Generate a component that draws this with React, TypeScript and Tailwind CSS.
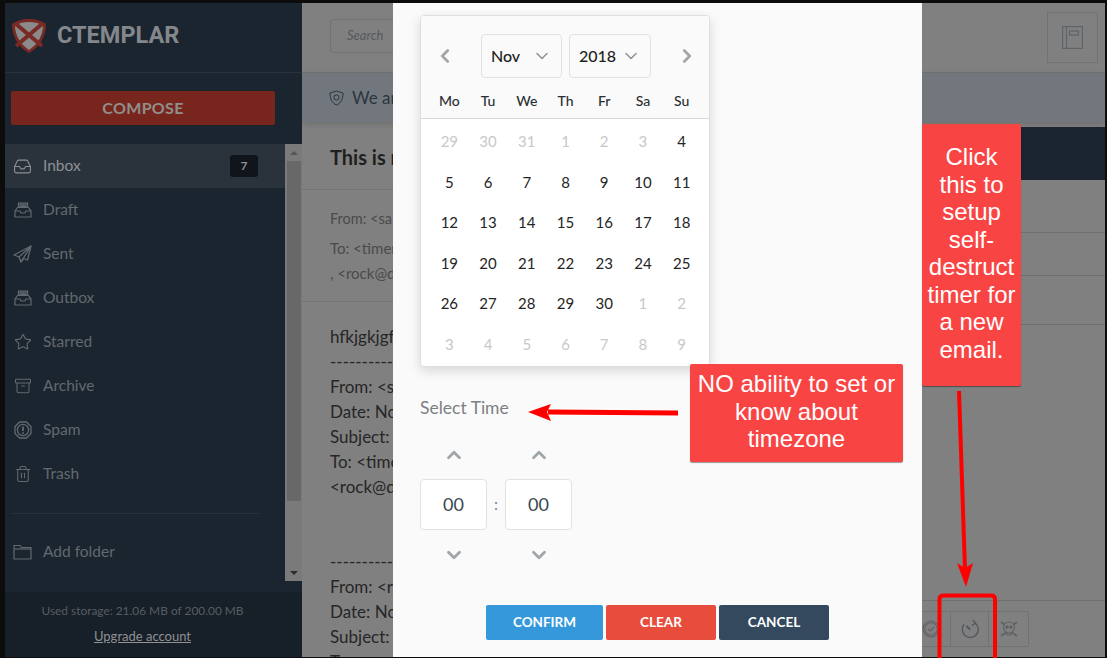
import React from "react";
import { Archive, ChevronDown, ChevronLeft, ChevronRight, ChevronUp, Star, Trash2, Inbox } from "lucide-react";

const Draft = ({ className = "" }: { className?: string }) => (
  <svg viewBox="0 0 18 16" width="18" height="16" fill="none" stroke="currentColor" strokeWidth="1.2" className={className}>
    <path d="M1 9 L3.5 5.5 H14.5 L17 9 V15 H1 Z" />
    <path d="M1 9 H6 L7 11 H11 L12 9 H17" />
    <path d="M4.5 5.5 V1 H13.5 V5.5" fill="currentColor" fillOpacity="0.5" />
    <path d="M6 3 H12 M6 4.6 H12" />
  </svg>
);

const SpamIcon = () => (
  <svg viewBox="0 0 18 18" width="18" height="18" fill="none" stroke="currentColor" strokeWidth="1.3">
    <path d="M5.6 1 H12.4 L17 5.6 V12.4 L12.4 17 H5.6 L1 12.4 V5.6 Z" />
    <circle cx="9" cy="9" r="5.6" />
    <path d="M9 5.6 V10" strokeWidth="1.8" />
    <path d="M9 11.3 V12.7" strokeWidth="1.8" />
  </svg>
);

const SentIcon = () => (
  <svg viewBox="0 0 19 18" width="19" height="18" fill="none" stroke="currentColor" strokeWidth="1.3" strokeLinejoin="round">
    <path d="M18 1 L1 10 L6 12 L8 17 L10.5 13.5 L14.5 15 Z" />
    <path d="M18 1 L6 12 M18 1 L8 17" />
  </svg>
);

const FolderIcon = () => (
  <svg viewBox="0 0 19 16" width="19" height="16" fill="none" stroke="currentColor" strokeWidth="1.2">
    <path d="M1 15 V1.5 H7 L8.5 3.5 H18 V15 Z" />
    <path d="M1 5 H18" />
  </svg>
);

const Logo = () => (
  <svg viewBox="0 0 36 36" width="36" height="36" className="shrink-0">
    <path d="M18 1 C25 1 31 3 35 6 C35 18 29 29 18 35 C7 29 1 18 1 6 C5 3 11 1 18 1 Z" fill="#7a2a24" />
    <path d="M18 4 C23 4 28 5 32 7.5 C32 17 27 26 18 32 C9 26 4 17 4 7.5 C8 5 13 4 18 4 Z" fill="#8b8b8b" />
    <path d="M5 6 L31 28 M31 6 L5 28" stroke="#7a2a24" strokeWidth="4" />
  </svg>
);

const nav = [
  { label: "Inbox", icon: <Inbox size={19} strokeWidth={1.4} />, active: true },
  { label: "Draft", icon: <Draft /> },
  { label: "Sent", icon: <SentIcon /> },
  { label: "Outbox", icon: <Draft /> },
  { label: "Starred", icon: <Star size={18} strokeWidth={1.5} /> },
  { label: "Archive", icon: <Archive size={18} strokeWidth={1.4} /> },
  { label: "Spam", icon: <SpamIcon /> },
  { label: "Trash", icon: <Trash2 size={18} strokeWidth={1.4} /> },
];

const weeks = [
  [["29", 0], ["30", 0], ["31", 0], ["1", 0], ["2", 0], ["3", 0], ["4", 1]],
  [["5", 1], ["6", 1], ["7", 1], ["8", 1], ["9", 1], ["10", 1], ["11", 1]],
  [["12", 1], ["13", 1], ["14", 1], ["15", 1], ["16", 1], ["17", 1], ["18", 1]],
  [["19", 1], ["20", 1], ["21", 1], ["22", 1], ["23", 1], ["24", 1], ["25", 1]],
  [["26", 1], ["27", 1], ["28", 1], ["29", 1], ["30", 1], ["1", 0], ["2", 0]],
  [["3", 0], ["4", 0], ["5", 0], ["6", 0], ["7", 0], ["8", 0], ["9", 0]],
] as [string, number][][];

const days = ["Mo", "Tu", "We", "Th", "Fr", "Sa", "Su"];

function Sidebar() {
  return (
    <aside className="w-[297px] shrink-0 bg-[#1b252f] flex flex-col">
      <div className="h-[70px] border-b border-[#29323c] flex items-center pl-[6px] gap-[10px] pb-[4px]">
        <Logo />
        <span className="text-[23.5px] font-bold text-[#84888c] font-['Roboto',sans-serif]">CTEMPLAR</span>
      </div>
      <div className="pl-[6px] pt-[18px]">
        <div className="w-[264px] h-[34px] rounded-[2px] bg-[#78251e] flex items-center justify-center text-[16px] font-bold tracking-[0.3px] text-[#8f8f8b]">COMPOSE</div>
      </div>
      <div className="mt-[19px] flex h-[437px]">
        <div className="w-[280px] shrink-0">
          {nav.map((n) => (
            <div key={n.label} className={`h-[44px] flex items-center text-[15.5px] ${n.active ? "bg-[#2a323c] text-[#8d9094]" : "text-[#62696f]"}`}>
              <span className="w-[38px] flex justify-center pr-[3px] shrink-0">{n.icon}</span>
              <span className="pb-[1px]">{n.label}</span>
              {n.active && <span className="ml-auto mr-[27px] w-[28px] h-[22px] rounded-[3px] bg-[#10151b] text-[#8f9295] text-[12px] font-bold flex items-center justify-center">7</span>}
            </div>
          ))}
          <div className="mx-[6px] mt-[17px] w-[248px] border-t border-[#29323c]" />
          <div className="h-[44px] mt-[16px] flex items-center text-[15.5px] text-[#62696f]">
            <span className="w-[38px] flex justify-center pr-[3px] shrink-0"><FolderIcon /></span>
            <span className="pb-[1px]">Add folder</span>
          </div>
        </div>
        <div className="w-[17px] bg-[#7a7a7a] flex flex-col items-center shrink-0">
          <div className="h-[17px] flex items-center"><div className="w-0 h-0 border-x-[4px] border-x-transparent border-b-[4px] border-b-[#565656]" /></div>
          <div className="w-[14px] h-[340px] bg-[#686868]" />
          <div className="flex-1" />
          <div className="h-[17px] flex items-center"><div className="w-0 h-0 border-x-[4px] border-x-transparent border-t-[4px] border-t-[#2c2c2c]" /></div>
        </div>
      </div>
      <div className="mt-[11px] flex-1 bg-[#171f28] flex flex-col items-center pt-[11px] pr-[22px]">
        <div className="text-[11.9px] text-[#575d63] leading-[16px]">Used storage: 21.06 MB of 200.00 MB</div>
        <div className="text-[13px] text-[#8f9194] underline leading-[16px] mt-[9px]">Upgrade account</div>
      </div>
    </aside>
  );
}

function MainPane() {
  return (
    <main className="flex-1 min-w-0 bg-[#808080] flex flex-col overflow-hidden">
      <div className="h-[70px] shrink-0 border-b border-[#727272] flex items-center justify-between pl-[28px] pr-[7px]">
        <div className="h-[34px] w-[300px] border border-[#727272] rounded-[3px] flex items-center pl-[16px] text-[13px] italic text-[#55595c] -mt-[3px]">Search</div>
        <div className="w-[51px] h-[51px] border border-[#727272] flex items-center justify-center -mt-[1px]">
          <svg width="21" height="23" viewBox="0 0 21 23" fill="none" stroke="#5d646b" strokeWidth="1.2">
            <rect x="0.6" y="0.6" width="19.8" height="21.8" />
            <path d="M4.5 0.6 V22.4" />
            <rect x="7.5" y="5" width="9" height="4" />
          </svg>
        </div>
      </div>
      <div className="h-[49px] shrink-0 bg-[#71777d] flex items-center pl-[27px] gap-[8px] text-[17px] text-[#2b3540] shadow-[0_2px_6px_rgba(0,0,0,0.15)]">
        <svg width="15" height="16" viewBox="0 0 15 16" fill="none" stroke="#2b3540" strokeWidth="1">
          <path d="M7.5 1 L14 3 C14 9 12 13 7.5 15 C3 13 1 9 1 3 Z" />
          <circle cx="7.5" cy="7.5" r="2.6" />
        </svg>
        <span>We are</span>
      </div>
      <div className="flex flex-1 min-h-0">
        <div className="w-[400px] shrink-0 flex flex-col overflow-hidden whitespace-nowrap">
          <div className="h-[68px] shrink-0 border-b border-[#747474] flex items-center pl-[28px] text-[20px] font-bold text-[#1f1f1f] pt-[2px]">This is r</div>
          <div className="h-[112px] shrink-0 border-b border-[#747474] pl-[28px] text-[14.5px] text-[#4a4a4a]">
            <div className="mt-[18px] leading-[22px]">From: &lt;sa</div>
            <div className="mt-[7px] leading-[22px] text-[15px]">To: &lt;timer</div>
            <div className="mt-[3px] leading-[22px] text-[15px]">, &lt;rock@d</div>
          </div>
          <div className="pl-[28px] pt-[22px] text-[17px] leading-[25px] text-[#262626]">
            <div>hfkjgkjgf</div>
            <div>----------</div>
            <div>From: &lt;s</div>
            <div>Date: No</div>
            <div>Subject:</div>
            <div>To: &lt;time</div>
            <div>&lt;rock@d</div>
            <div className="h-[50px]" />
            <div>----------</div>
            <div>From: &lt;r</div>
            <div>Date: No</div>
            <div>Subject:</div>
            <div className="h-[19px] overflow-hidden">To:</div>
          </div>
        </div>
        <div className="flex-1 flex flex-col pt-[5px] min-w-0">
          <div className="h-[53px] shrink-0 bg-[#1b252f]" />
          <div className="h-[53px] shrink-0 border-b border-[#707070]" />
          <div className="h-[43px] shrink-0 border-b border-[#707070]" />
          <div className="h-[49px] shrink-0 border-b border-[#707070]" />
          <div className="h-[276px] shrink-0 border-b border-[#707070]" />
          <div className="flex justify-end pr-[76px] pt-[10px]">
            <div className="h-[36px] w-[40px] border border-[#727272] border-r-0 flex items-center justify-center">
              <svg width="18" height="18" viewBox="0 0 18 18" fill="none" stroke="#5e6266" strokeWidth="1.1"><circle cx="9" cy="9" r="8" /><circle cx="9" cy="9" r="6.3" /><path d="M6 9 L8.2 11 L12 7" /></svg>
            </div>
            <div className="h-[36px] w-[39px] border border-[#727272] flex items-center justify-center">
              <svg width="20" height="20" viewBox="0 0 20 20" fill="none" stroke="#53585e" strokeWidth="1.4"><path d="M4 5.5 A8 8 0 1 0 15 4" /><path d="M13 1 L15.5 4 L12 6.5" /><path d="M6.5 7 L10 10.5" strokeWidth="2" /></svg>
            </div>
            <div className="h-[36px] w-[40px] border border-[#727272] border-l-0 rounded-r-[2px] flex items-center justify-center">
              <svg width="20" height="18" viewBox="0 0 20 18" fill="none" stroke="#5e6266" strokeWidth="1.1"><circle cx="10" cy="7.5" r="5.5" /><circle cx="8" cy="7" r="1.2" fill="#5e6266" /><circle cx="12" cy="7" r="1.2" fill="#5e6266" /><path d="M2 2 L5.5 4.5 M18 2 L14.5 4.5 M2 16 L7 12.5 M18 16 L13 12.5" strokeWidth="1.8" /><path d="M8 13 V15 H12 V13" /></svg>
            </div>
          </div>
        </div>
      </div>
    </main>
  );
}

function Calendar() {
  return (
    <div className="w-[290px] h-[352px] shrink-0 border border-[#dfdfdf] rounded-[4px] overflow-hidden shadow-[0_4px_12px_rgba(0,0,0,0.14)] bg-white">
      <div className="bg-[#fafafa] h-[103px] pt-[18px] border-b border-[#d9d9d9]">
        <div className="h-[44px] flex items-center relative pl-[60px] gap-[7px]">
          <ChevronLeft size={22} strokeWidth={3} className="absolute left-[13px] text-[#a3a7ab]" />
          <div className="w-[81px] h-[44px] border border-[#e2e2e2] rounded-[4px] flex items-center justify-between pl-[9px] pr-[9px] text-[16px] font-medium text-[#1e1e1e]">
            Nov <ChevronDown size={20} strokeWidth={1.9} className="text-[#8e9499]" />
          </div>
          <div className="w-[82px] h-[44px] border border-[#e2e2e2] rounded-[4px] flex items-center justify-between pl-[9px] pr-[9px] text-[16px] font-medium text-[#1e1e1e]">
            2018 <ChevronDown size={20} strokeWidth={1.9} className="text-[#8e9499]" />
          </div>
          <ChevronRight size={22} strokeWidth={3} className="absolute right-[11px] text-[#a3a7ab]" />
        </div>
        <div className="grid grid-cols-7 pl-[9px] pr-[8px] mt-[13px] text-[14px] font-medium text-[#2a2f34] leading-[20px]">
          {days.map((d) => <div key={d} className="text-center">{d}</div>)}
        </div>
      </div>
      <div className="grid grid-cols-7 pl-[9px] pr-[8px] pt-[2px] text-[15px]">
        {weeks.flat().map(([d, on], i) => (
          <div key={i} className={`h-[40.5px] flex items-center justify-center ${on ? "text-[#252525]" : "text-[#c8c8c8]"}`}>{d}</div>
        ))}
      </div>
    </div>
  );
}

function TimeField() {
  return (
    <div className="w-[67px] flex flex-col items-center text-[#a0a5a9]">
      <ChevronUp size={22} strokeWidth={3} />
      <div className="mt-[13px] w-[67px] h-[51px] border border-[#e2e2e2] rounded-[4px] bg-white flex items-center justify-center text-[18px] text-[#39454f]">00</div>
      <ChevronDown size={22} strokeWidth={3} className="mt-[14px]" />
    </div>
  );
}

function Modal() {
  return (
    <div className="absolute left-[393px] top-[3px] bottom-[1px] w-[529px] bg-[#fafafa] pl-[27px] pt-[12px] flex flex-col">
      <Calendar />
      <div className="mt-[28px] text-[17.5px] leading-[26px] text-[#7c7f83]">Select Time</div>
      <div className="mt-[23px] flex items-start">
        <TimeField />
        <div className="w-[18px] h-[120px] flex items-center justify-center text-[16px] text-[#7a8289]">:</div>
        <TimeField />
      </div>
      <div className="mt-[39px] ml-[66px] flex gap-[3px] text-[13.5px] font-bold text-white">
        <div className="w-[117px] h-[35px] rounded-[2px] bg-[#3498db] flex items-center justify-center">CONFIRM</div>
        <div className="w-[110px] h-[35px] rounded-[2px] bg-[#e74c3c] flex items-center justify-center">CLEAR</div>
        <div className="w-[110px] h-[35px] rounded-[2px] bg-[#34495e] flex items-center justify-center">CANCEL</div>
      </div>
    </div>
  );
}

function Annotations() {
  return (
    <>
      <div className="absolute left-[690px] top-[364px] w-[213px] h-[98px] rounded-[2px] bg-[#f94444] pt-[6px] text-center text-[24px] leading-[27.5px] text-white font-['Liberation_Sans',sans-serif] shadow-[0_1px_1px_rgba(0,0,0,0.4)]">
        NO ability to set or know about timezone
      </div>
      <div className="absolute left-[922px] top-[124px] w-[99px] h-[262px] rounded-[2px] bg-[#f94444] pt-[19px] text-center text-[24px] leading-[27.5px] text-white font-['Liberation_Sans',sans-serif] shadow-[0_1px_1px_rgba(0,0,0,0.4)]">
        Click<br />this to<br />setup<br />self-<br />destruct<br />timer for<br />a new<br />email.
      </div>
      <svg className="absolute left-0 top-0 pointer-events-none" width="1107" height="658" viewBox="0 0 1107 658" fill="none">
        <path d="M678 413 L548 412" stroke="#ff0000" strokeWidth="5" />
        <path d="M528 412 L551 404 L547 412 L551 421 Z" fill="#ff0000" />
        <path d="M959 391 L965 570" stroke="#ff0000" strokeWidth="4" />
        <path d="M966 587 L957 563 L965 568 L973 563 Z" fill="#ff0000" />
        <path d="M939.5 660 V599 Q939.5 595.5 943.5 595.5 H991 Q995 595.5 995 599 V660" stroke="#ff0000" strokeWidth="4" />
      </svg>
    </>
  );
}

export default function App() {
  return (
    <div className="relative w-[1107px] h-[658px] overflow-hidden bg-[#0c0c0c] pt-[3px] pl-[5px] pr-[2px] pb-[1px] flex font-['Lato',sans-serif]">
      <Sidebar />
      <MainPane />
      <Modal />
      <Annotations />
    </div>
  );
}
